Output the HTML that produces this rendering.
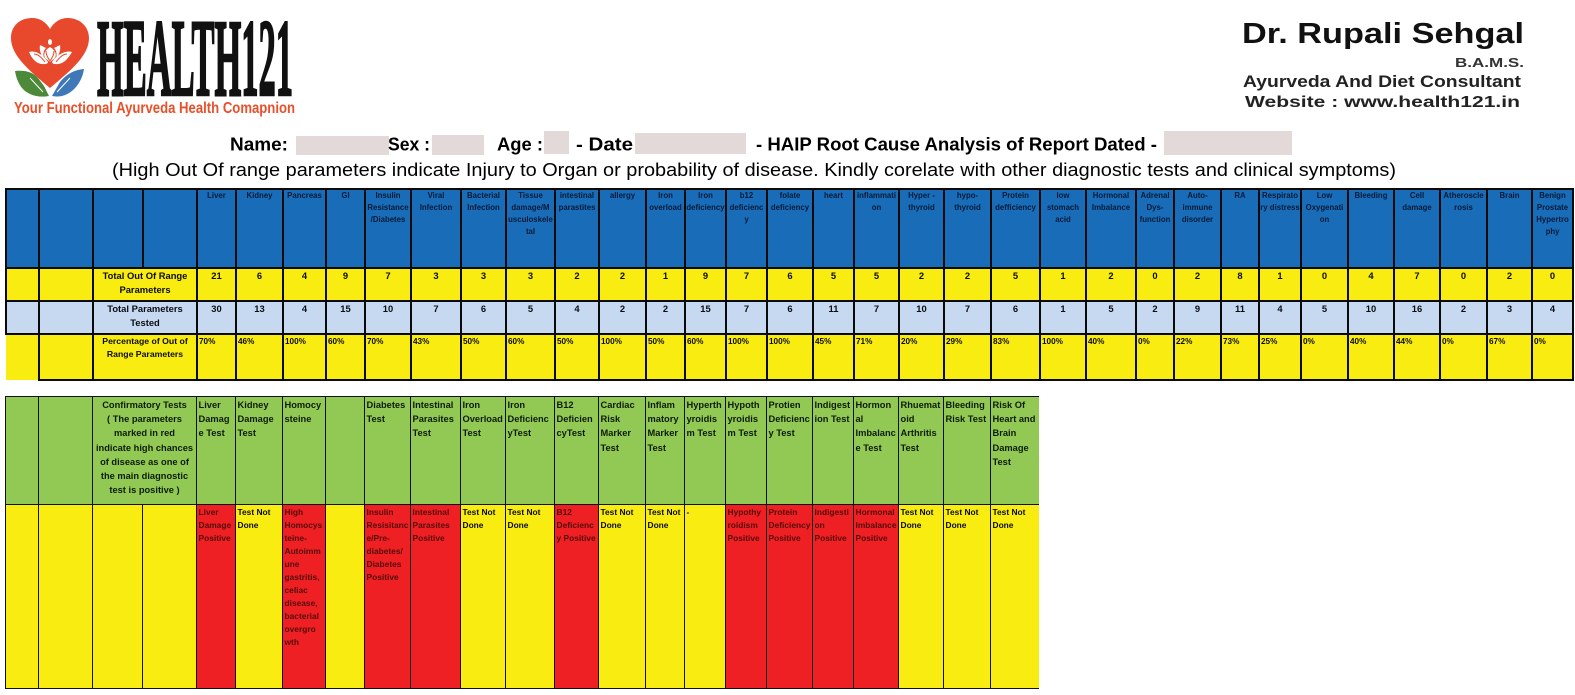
<!DOCTYPE html>
<html lang="en">
<head>
<meta charset="utf-8">
<title>Health121 Root Cause Analysis</title>
<style>
html,body{margin:0;padding:0;background:#fff}
body{width:1575px;height:695px;overflow:hidden;position:relative;font-family:"Liberation Sans",Arial,sans-serif}
svg.o{position:absolute;left:0;top:0}
table{position:absolute;left:5px;border-collapse:collapse;table-layout:fixed;font-weight:bold;white-space:nowrap}
td{border:2px solid #0a0a0a;padding:0;vertical-align:top;text-align:center;overflow:hidden}
#t1{top:188px;width:1567px}
#t2{top:396px;width:1033px}
#t2 td{border:1px solid #111}
.b td{background:#196db8;color:#041a38;font-size:7.8px;line-height:12px}
.y td{background:#f8ec10;color:#0c0c00;font-size:9.4px;line-height:14.2px}
.l td{background:#c6d9f0;color:#0a0e14;font-size:9.4px;line-height:14.2px}
.p td{background:#f8ec10;color:#0c0c00;font-size:8.2px;line-height:13px;text-align:left;padding-left:1px}
.p td.c{text-align:center;padding-left:0;font-size:8.7px}
.p td.n{border-left:none;border-bottom:none}
.g td{background:#92c854;color:#0e1c06;font-size:9.3px;line-height:14.2px;text-align:left;padding-left:1.5px;padding-top:1px}
.g td.c{text-align:center;padding-left:0}
.r td{background:#f8ec10;color:#0c0c00;font-size:8.4px;line-height:13px;text-align:left;padding-left:1.5px;padding-top:1px}
.r td.x{background:#ee2024;color:#560a0a}
#t2 td:last-child{border-right:none}
</style>
</head>
<body>
<svg class="o" width="1575" height="695" viewBox="0 0 1575 695" xmlns="http://www.w3.org/2000/svg">
  <path d="M50,88 C30,71 11,56 11,38 C11,25 21,18 32,18 C40,18 46,22 50,29 C54,22 60,18 68,18 C79,18 89,26 89,38 C89,56 70,71 50,88Z" fill="#e8482b"/>
  <g fill="#fff">
    <ellipse cx="50" cy="42" rx="2" ry="3"/>
    <path d="M50,47 C45,50 43,54 45,58 L50,62 L55,58 C57,54 55,50 50,47Z"/>
    <path d="M40,45 C39,50 41,55 44,59 C43,55 43,51 46,48 C44,47 42,46 40,45Z"/>
    <path d="M60,45 C61,50 59,55 56,59 C57,55 57,51 54,48 C56,47 58,46 60,45Z"/>
    <path d="M29,52 C36,50 43,55 48,62 C48,63 47,64 45,64 C37,65 32,59 29,52Z"/>
    <path d="M72,52 C65,50 57,55 52,62 C52,63 53,64 55,64 C63,65 68,59 72,52Z"/>
  </g>
  <g fill="none" stroke="#e8482b" stroke-width="1">
    <path d="M46,51 C46,55 48,58 50,61 C52,58 54,55 54,51"/>
    <path d="M34,54 C38,54 42,58 45,62"/>
    <path d="M67,54 C63,54 59,58 56,62"/>
  </g>
  <path d="M15,71 C25,70 33,72 38,78 L44,86 L49,96 C38,98 28,95 22,88 C18,83 16,77 15,71Z" fill="#4c8a3a"/>
  <path d="M84,69 C72,70 65,76 60,82 L52,96 C62,98 70,94 76,87 C80,82 83,76 84,69Z" fill="#3f78b8"/>
  <g fill="none" stroke="#fff" stroke-width="1">
    <path d="M30,78 L43,92"/>
    <path d="M70,78 L57,92"/>
  </g>
  <text x="97" y="95" font-family="'Liberation Serif',serif" font-weight="bold" font-size="110" textLength="196" lengthAdjust="spacingAndGlyphs" fill="#111" stroke="#111" stroke-width="2.6">HEALTH121</text>
  <text x="14" y="113" font-family="'Liberation Sans',sans-serif" font-weight="bold" font-size="16" textLength="281" lengthAdjust="spacingAndGlyphs" fill="#e8502a">Your Functional Ayurveda Health Comapnion</text>

  <g font-family="'Liberation Sans',sans-serif" font-weight="bold" fill="#111">
    <text x="1242" y="43" font-size="28.5" textLength="282" lengthAdjust="spacingAndGlyphs">Dr. Rupali Sehgal</text>
    <text x="1455" y="67" font-size="13" textLength="69" lengthAdjust="spacingAndGlyphs" fill="#333">B.A.M.S.</text>
    <text x="1243" y="87" font-size="17" textLength="278" lengthAdjust="spacingAndGlyphs" fill="#222">Ayurveda And Diet Consultant</text>
    <text x="1245" y="107" font-size="16" textLength="275" lengthAdjust="spacingAndGlyphs" fill="#222">Website : www.health121.in</text>
  </g>

  <g fill="#e3d9d9">
    <rect x="296" y="136" width="93" height="19"/>
    <rect x="432" y="135" width="52" height="20"/>
    <rect x="544" y="131" width="25" height="23"/>
    <rect x="635" y="133" width="111" height="21"/>
    <rect x="1164" y="131" width="128" height="24"/>
  </g>
  <g font-family="'Liberation Sans',sans-serif" font-weight="bold" font-size="18" fill="#000">
    <text x="230" y="150.5" textLength="58" lengthAdjust="spacingAndGlyphs">Name:</text>
    <text x="388" y="150.5" textLength="42" lengthAdjust="spacingAndGlyphs">Sex :</text>
    <text x="497" y="150.5" textLength="46" lengthAdjust="spacingAndGlyphs">Age :</text>
    <text x="576" y="150.5" textLength="57" lengthAdjust="spacingAndGlyphs">- Date</text>
    <text x="756" y="150.5" textLength="401" lengthAdjust="spacingAndGlyphs">- HAIP Root Cause Analysis of Report Dated -</text>
  </g>
  <text x="112" y="176" font-family="'Liberation Sans',sans-serif" font-size="18" textLength="1284" lengthAdjust="spacingAndGlyphs" fill="#000">(High Out Of range parameters indicate Injury to Organ or probability of disease. Kindly corelate with other diagnostic tests and clinical symptoms)</text>
</svg>

<table id="t1">
<colgroup>
<col style="width:33px"><col style="width:54px"><col style="width:50px"><col style="width:54px"><col style="width:39px"><col style="width:47px"><col style="width:43px"><col style="width:39px"><col style="width:46px"><col style="width:50px"><col style="width:45px"><col style="width:49px"><col style="width:44px"><col style="width:47px"><col style="width:39px"><col style="width:41px"><col style="width:41px"><col style="width:46px"><col style="width:41px"><col style="width:45px"><col style="width:45px"><col style="width:47px"><col style="width:49px"><col style="width:46px"><col style="width:50px"><col style="width:38px"><col style="width:47px"><col style="width:38px"><col style="width:42px"><col style="width:47px"><col style="width:46px"><col style="width:46px"><col style="width:47px"><col style="width:45px"><col style="width:41px">
</colgroup>
<tr class="b" style="height:79px"><td></td><td></td><td></td><td></td><td>Liver</td><td>Kidney</td><td>Pancreas</td><td>GI</td><td>Insulin<br>Resistance<br>/Diabetes</td><td>Viral<br>Infection</td><td>Bacterial<br>Infection</td><td>Tissue<br>damage/M<br>usculoskele<br>tal</td><td>intestinal<br>parastites</td><td>allergy</td><td>Iron<br>overload</td><td>Iron<br>deficiency</td><td>b12<br>deficienc<br>y</td><td>folate<br>deficiency</td><td>heart</td><td>inflammati<br>on</td><td>Hyper -<br>thyroid</td><td>hypo-<br>thyroid</td><td>Protein<br>defficiency</td><td>low<br>stomach<br>acid</td><td>Hormonal<br>Imbalance</td><td>Adrenal<br>Dys-<br>function</td><td>Auto-<br>immune<br>disorder</td><td>RA</td><td>Respirato<br>ry distress</td><td>Low<br>Oxygenati<br>on</td><td>Bleeding</td><td>Cell<br>damage</td><td>Atheroscle<br>rosis</td><td>Brain</td><td>Benign<br>Prostate<br>Hypertro<br>phy</td></tr>
<tr class="y" style="height:33px"><td></td><td></td><td colspan="2">Total Out Of Range<br>Parameters</td><td>21</td><td>6</td><td>4</td><td>9</td><td>7</td><td>3</td><td>3</td><td>3</td><td>2</td><td>2</td><td>1</td><td>9</td><td>7</td><td>6</td><td>5</td><td>5</td><td>2</td><td>2</td><td>5</td><td>1</td><td>2</td><td>0</td><td>2</td><td>8</td><td>1</td><td>0</td><td>4</td><td>7</td><td>0</td><td>2</td><td>0</td></tr>
<tr class="l" style="height:33px"><td></td><td></td><td colspan="2">Total Parameters<br>Tested</td><td>30</td><td>13</td><td>4</td><td>15</td><td>10</td><td>7</td><td>6</td><td>5</td><td>4</td><td>2</td><td>2</td><td>15</td><td>7</td><td>6</td><td>11</td><td>7</td><td>10</td><td>7</td><td>6</td><td>1</td><td>5</td><td>2</td><td>9</td><td>11</td><td>4</td><td>5</td><td>10</td><td>16</td><td>2</td><td>3</td><td>4</td></tr>
<tr class="p" style="height:46px"><td class="n"></td><td></td><td colspan="2" class="c">Percentage of Out of<br>Range Parameters</td><td>70%</td><td>46%</td><td>100%</td><td>60%</td><td>70%</td><td>43%</td><td>50%</td><td>60%</td><td>50%</td><td>100%</td><td>50%</td><td>60%</td><td>100%</td><td>100%</td><td>45%</td><td>71%</td><td>20%</td><td>29%</td><td>83%</td><td>100%</td><td>40%</td><td>0%</td><td>22%</td><td>73%</td><td>25%</td><td>0%</td><td>40%</td><td>44%</td><td>0%</td><td>67%</td><td>0%</td></tr>
</table>

<table id="t2">
<colgroup>
<col style="width:33px"><col style="width:54px"><col style="width:50px"><col style="width:54px"><col style="width:39px"><col style="width:47px"><col style="width:43px"><col style="width:39px"><col style="width:46px"><col style="width:50px"><col style="width:45px"><col style="width:49px"><col style="width:44px"><col style="width:47px"><col style="width:39px"><col style="width:41px"><col style="width:41px"><col style="width:46px"><col style="width:41px"><col style="width:45px"><col style="width:45px"><col style="width:47px"><col style="width:48px">
</colgroup>
<tr class="g" style="height:108px"><td></td><td></td><td colspan="2" class="c">Confirmatory Tests<br>( The parameters<br>marked in red<br>indicate high chances<br>of disease as one of<br>the main diagnostic<br>test is positive )</td><td>Liver<br>Damag<br>e Test</td><td>Kidney<br>Damage<br>Test</td><td>Homocy<br>steine</td><td></td><td>Diabetes<br>Test</td><td>Intestinal<br>Parasites<br>Test</td><td>Iron<br>Overload<br>Test</td><td>Iron<br>Deficienc<br>yTest</td><td>B12<br>Deficien<br>cyTest</td><td>Cardiac<br>Risk<br>Marker<br>Test</td><td>Inflam<br>matory<br>Marker<br>Test</td><td>Hyperth<br>yroidis<br>m Test</td><td>Hypoth<br>yroidis<br>m Test</td><td>Protien<br>Deficienc<br>y Test</td><td>Indigest<br>ion Test</td><td>Hormon<br>al<br>Imbalanc<br>e Test</td><td>Rhuemat<br>oid<br>Arthritis<br>Test</td><td>Bleeding<br>Risk Test</td><td>Risk Of<br>Heart and<br>Brain<br>Damage<br>Test</td></tr>
<tr class="r" style="height:184px"><td></td><td></td><td></td><td></td><td class="x">Liver<br>Damage<br>Positive</td><td>Test Not<br>Done</td><td class="x">High<br>Homocys<br>teine-<br>Autoimm<br>une<br>gastritis,<br>celiac<br>disease,<br>bacterial<br>overgro<br>wth</td><td></td><td class="x">Insulin<br>Resisitanc<br>e/Pre-<br>diabetes/<br>Diabetes<br>Positive</td><td class="x">Intestinal<br>Parasites<br>Positive</td><td>Test Not<br>Done</td><td>Test Not<br>Done</td><td class="x">B12<br>Deficienc<br>y Positive</td><td>Test Not<br>Done</td><td>Test Not<br>Done</td><td>-</td><td class="x">Hypothy<br>roidism<br>Positive</td><td class="x">Protein<br>Deficiency<br>Positive</td><td class="x">Indigesti<br>on<br>Positive</td><td class="x">Hormonal<br>Imbalance<br>Positive</td><td>Test Not<br>Done</td><td>Test Not<br>Done</td><td>Test Not<br>Done</td></tr>
</table>
</body>
</html>
